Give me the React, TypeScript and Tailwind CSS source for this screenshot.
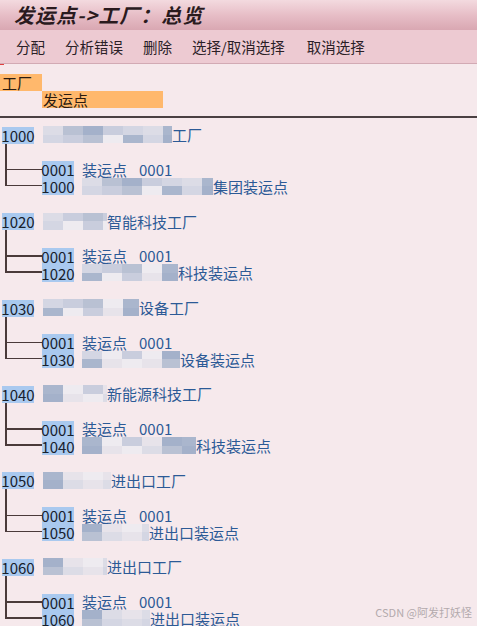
import React from "react";

const FONT = { fontFamily: '"Noto Sans CJK SC", "Noto Sans", sans-serif' };

const PALETTE = ["#dcdce6", "#c9cddd", "#aab6cd", "#e7e3ea", "#b9c1d3", "#d4d6e3", "#eeebf0", "#a4b1ca"];

function Blur({ width, seed }: { width: number; seed: number }) {
  const cells = Math.ceil(width / 20);
  const rows = [0, 1];
  return (
    <span className="inline-flex flex-col h-[17px] overflow-hidden shrink-0" style={{ width }}>
      {rows.map((r) => (
        <span key={r} className="flex h-[8.5px]">
          {Array.from({ length: cells }).map((_, i) => {
            const c = PALETTE[(i * 3 + r * 5 + seed * 7 + ((i * i + seed) % 3)) % PALETTE.length];
            return <span key={i} className="block h-full w-[20px] shrink-0" style={{ background: c }} />;
          })}
        </span>
      ))}
    </span>
  );
}

type Group = {
  code: string;
  fBlur: number;
  fText: string;
  sBlur: number;
  sText: string;
};

const groups: Group[] = [
  { code: "1000", fBlur: 129, fText: "工厂", sBlur: 131, sText: "集团装运点" },
  { code: "1020", fBlur: 64, fText: "智能科技工厂", sBlur: 96, sText: "科技装运点" },
  { code: "1030", fBlur: 96, fText: "设备工厂", sBlur: 98, sText: "设备装运点" },
  { code: "1040", fBlur: 64, fText: "新能源科技工厂", sBlur: 114, sText: "科技装运点" },
  { code: "1050", fBlur: 68, fText: "进出口工厂", sBlur: 67, sText: "进出口装运点" },
  { code: "1060", fBlur: 64, fText: "进出口工厂", sBlur: 68, sText: "进出口装运点" },
];

function Row({ children, className = "" }: { children?: React.ReactNode; className?: string }) {
  return <div className={"relative flex items-center h-[17.3px] " + className}>{children}</div>;
}

function Num({ children }: { children: React.ReactNode }) {
  return (
    <span className="inline-flex items-center h-[17px] w-[32px] bg-[#a9c9ef] text-[#17202c] text-[15px] leading-[17px] justify-center shrink-0">
      {children}
    </span>
  );
}

function GroupBlock({ g, idx }: { g: Group; idx: number }) {
  return (
    <div className="relative">
      {/* tree lines */}
      <div className="absolute left-[5px] top-[16px] w-[1.5px] h-[44px] bg-[#4a3a3a]" />
      <div className="absolute left-[5px] top-[43px] w-[37px] h-[1.5px] bg-[#4a3a3a]" />
      <div className="absolute left-[5px] top-[59px] w-[37px] h-[1.5px] bg-[#4a3a3a]" />
      <Row>
        <span className="ml-[2px]">
          <Num>{g.code}</Num>
        </span>
        <span className="ml-[9px] flex items-center">
          <Blur width={g.fBlur} seed={idx * 2} />
          <span className="text-[15px] leading-[17px] text-[#2c5a96] whitespace-nowrap">{g.fText}</span>
        </span>
      </Row>
      <Row />
      <Row>
        <span className="ml-[42px]">
          <Num>0001</Num>
        </span>
        <span className="ml-[8px] text-[15px] leading-[17px] text-[#2c5a96] whitespace-nowrap">装运点</span>
        <span className="ml-[12px] text-[15px] leading-[17px] text-[#2c5a96] whitespace-nowrap">0001</span>
      </Row>
      <Row>
        <span className="ml-[42px]">
          <Num>{g.code}</Num>
        </span>
        <span className="ml-[8px] flex items-center">
          <Blur width={g.sBlur} seed={idx * 2 + 1} />
          <span className="text-[15px] leading-[17px] text-[#2c5a96] whitespace-nowrap">{g.sText}</span>
        </span>
      </Row>
      <Row />
    </div>
  );
}

export default function App() {
  return (
    <div className="relative w-[477px] h-[626px] overflow-hidden bg-[#f6e9ec]" style={FONT}>
      {/* Title bar */}
      <div className="h-[30px] flex items-center pl-[14px] bg-gradient-to-b from-[#f3dadf] via-[#e7bec7] to-[#d9a7b2]">
        <span className="text-[20px] font-bold italic text-[#2a1a1e] tracking-[1px] leading-none">
          发运点-&gt;工厂：总览
        </span>
      </div>
      {/* Toolbar */}
      <div className="h-[34px] flex items-center pl-[16px] gap-[20px] bg-[#edcad2] border-b border-[#d2aab4] text-[14.5px] text-[#2a2026]">
        <span>分配</span>
        <span>分析错误</span>
        <span>删除</span>
        <span>选择/取消选择</span>
        <span className="ml-[2px]">取消选择</span>
      </div>
      <div className="h-[1px] w-[4px] bg-[#e04040]" />
      {/* Content */}
      <div className="pt-[9px]">
        <Row>
          <span className="inline-flex items-center h-[17px] w-[42px] bg-[#ffb86c] pl-[2px] text-[15px] leading-[17px] text-[#2a1a10]">
            工厂
          </span>
        </Row>
        <Row>
          <span className="ml-[42px] inline-flex items-center h-[17px] w-[121px] bg-[#ffb86c] pl-[1px] text-[15px] leading-[17px] text-[#2a1a10]">
            发运点
          </span>
        </Row>
        <div className="h-[17.3px] flex items-center">
          <div className="w-full h-[1.5px] bg-[#4a4042]" />
        </div>
        {groups.map((g, i) => (
          <GroupBlock key={g.code} g={g} idx={i} />
        ))}
      </div>
      {/* watermark */}
      <div className="absolute right-[5px] bottom-[8px] text-[11px] text-[#b3aaad] leading-none">CSDN @阿发打妖怪</div>
    </div>
  );
}
